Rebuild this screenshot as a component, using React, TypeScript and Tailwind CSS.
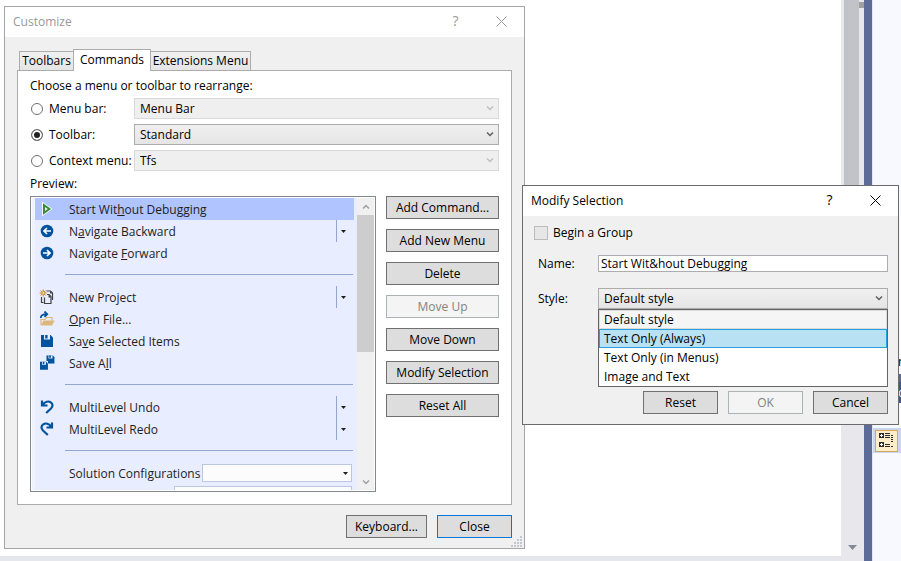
import type { ReactNode } from "react";

type IconProps = { children: ReactNode };

function Icon({ children }: IconProps) {
  return (
    <svg viewBox="0 0 16 16" className="size-4 shrink-0" aria-hidden="true">
      {children}
    </svg>
  );
}

function Floppy({ transform }: { transform?: string }) {
  return (
    <g transform={transform}>
      <path d="M2 2h9.500L14 4.500V14H2z" fill="#00539c" />
      <path d="M5 2h6v4.500H5z" fill="#e8edff" />
      <path d="M6.200 2h2.300v3.300H6.200z" fill="#00539c" />
      <path d="M6.200 2h2.300v4H6.200z" fill="#00539c" opacity="0.300" />
    </g>
  );
}

const icons: Record<string, ReactNode> = {
  start: (
    <Icon>
      <path d="M3 0.500 13.500 8 3 15.500z" fill="#f2f5fb" />
      <path d="M4 2.300 12 8 4 13.700z" fill="#388a34" />
      <path d="M6 6 8.800 8 6 10z" fill="#f0f3f8" />
    </Icon>
  ),
  back: (
    <Icon>
      <circle cx="8" cy="8" r="6.300" fill="#00539c" />
      <path d="M12 8H5M8 5 5 8l3 3" fill="none" stroke="#fff" strokeWidth="1.700" />
    </Icon>
  ),
  forward: (
    <Icon>
      <circle cx="8" cy="8" r="6.300" fill="#00539c" />
      <path d="M4 8h7M8 5l3 3-3 3" fill="none" stroke="#fff" strokeWidth="1.700" />
    </Icon>
  ),
  project: (
    <Icon>
      <path d="M2.500 8v5.500h2" fill="none" stroke="#424242" strokeWidth="1.200" />
      <path d="M7.500 2h4l2 2v7" fill="none" stroke="#424242" strokeWidth="1.200" />
      <path d="M11 2v2.500h2.500z" fill="#424242" />
      <path d="M5.500 8.500v6h6.500V7.500L10 5.500H8" fill="none" stroke="#424242" strokeWidth="1.200" />
      <path d="M9.500 5.500v3H12z" fill="#424242" />
      <path d="M4.200 0.500v7M0.700 4h7M1.700 1.500l5 5M6.700 1.500l-5 5" stroke="#c27d1a" />
      <circle cx="4.200" cy="4" r="1.200" fill="#fff" stroke="#c27d1a" strokeWidth="0.600" />
    </Icon>
  ),
  open: (
    <Icon>
      <path d="M2 14V8.500h4L7.500 6.500H13v3" fill="none" stroke="#dcb67a" strokeWidth="1.200" />
      <path d="M4.500 9.500H15.500L13 14.500H2z" fill="#dcb67a" />
      <path d="M2 7C1.500 4.500 3.500 3.200 8 3.200M5.500 0.500 8.200 3.200 5.500 5.900" fill="none" stroke="#00539c" strokeWidth="1.800" />
    </Icon>
  ),
  save: (
    <Icon>
      <Floppy />
    </Icon>
  ),
  saveAll: (
    <Icon>
      <Floppy transform="translate(6.200 -0.800) scale(0.660)" />
      <path d="M0.500 6h8.500v10H0.500z" fill="#e8edff" />
      <Floppy transform="translate(-0.300 5.500) scale(0.660)" />
    </Icon>
  ),
  undo: (
    <Icon>
      <path d="M3 1.500V6.500h5.500M3.500 6C6 2.500 9.500 1.800 11.800 3.300S14 7.500 12 9.500L7.200 14" fill="none" stroke="#00539c" strokeWidth="2.200" />
    </Icon>
  ),
  redo: (
    <Icon>
      <path d="M13 1.500V6.500H7.500M12.500 6C10 2.500 6.500 1.800 4.200 3.300S2 7.500 4 9.500L8.800 14" fill="none" stroke="#00539c" strokeWidth="2.200" />
    </Icon>
  ),
};

type Command = { icon?: string; label: ReactNode; split?: boolean; selected?: boolean };

const groups: Command[][] = [
  [
    { icon: "start", label: <>Start Wit<u>h</u>out Debugging</>, selected: true },
    { icon: "back", label: <>N<u>a</u>vigate Backward</>, split: true },
    { icon: "forward", label: <>Navigate <u>F</u>orward</> },
  ],
  [
    { icon: "project", label: "New Project", split: true },
    { icon: "open", label: <><u>O</u>pen File...</> },
    { icon: "save", label: <>Sa<u>v</u>e Selected Items</> },
    { icon: "saveAll", label: <>Save A<u>l</u>l</> },
  ],
  [
    { icon: "undo", label: "MultiLevel Undo", split: true },
    { icon: "redo", label: "MultiLevel Redo", split: true },
  ],
];

function Chevron({ className }: { className: string }) {
  return (
    <svg viewBox="0 0 8 6" className={"pointer-events-none h-1.5 w-2 " + className} aria-hidden="true">
      <path d="M1 1.500 4 4.500 7 1.500" fill="none" stroke="currentColor" strokeWidth="1.500" />
    </svg>
  );
}

function DropArrow() {
  return (
    <svg viewBox="0 0 5 3" className="h-[3px] w-[5px]" aria-hidden="true">
      <path d="M0 0h5L2.500 3z" fill="#1e1e1e" />
    </svg>
  );
}

function CommandRow({ icon, label, split, selected }: Command) {
  return (
    <li className={"flex h-[22px] w-[319px] " + (selected ? "bg-[#b0c4ff]" : "")}>
      <button type="button" className="flex flex-1 items-center gap-[14px] pl-1 text-left">
        {icon && icons[icon]}
        <span className="pt-0.5 whitespace-nowrap">{label}</span>
      </button>
      {split && (
        <button type="button" aria-label="More" className="flex w-[18px] items-center border-l border-[#93a5d0] pl-1">
          <DropArrow />
        </button>
      )}
    </li>
  );
}

function Separator() {
  return (
    <li role="separator" className="flex h-[22px] w-[318px] pt-[10px] pl-[30px]">
      <span className="h-px flex-1 bg-[#93a5d0]" />
    </li>
  );
}

type SelectProps = { id: string; value: string; options?: string[]; disabled?: boolean };

function Select({ id, value, options = [value], disabled }: SelectProps) {
  return (
    <span className="relative flex flex-1">
      <select
        id={id}
        aria-label={value}
        defaultValue={value}
        disabled={disabled}
        className="h-[21px] w-full appearance-none border border-[#acacac] bg-linear-to-b from-[#f0f0f0] to-[#e5e5e5] px-[5px] leading-[18px] text-black opacity-100 outline-none disabled:border-[#d9d9d9] disabled:from-[#efefef] disabled:to-[#efefef]"
      >
        {options.map((o) => (
          <option key={o}>{o}</option>
        ))}
      </select>
      <Chevron className={"absolute top-[7px] right-[5px] " + (disabled ? "text-[#bfbfbf]" : "text-[#606060]")} />
    </span>
  );
}

type ButtonProps = { children: ReactNode; disabled?: boolean; primary?: boolean; className?: string };

function Button({ children, disabled, primary, className = "" }: ButtonProps) {
  const tone = disabled
    ? "border-[#adb2b5] bg-[#f4f4f4] text-[#838383]"
    : primary
      ? "border-[#0078d7] bg-[#dddddd]"
      : "border-[#707070] bg-[#dddddd]";
  return (
    <button type="button" disabled={disabled} className={"h-[23px] border text-center leading-5 whitespace-nowrap " + tone + " " + className}>
      {children}
    </button>
  );
}

function TitleBar({ title, className }: { title: string; className: string }) {
  return (
    <header className={"flex h-[30px] items-center bg-white pl-2 " + className}>
      <h2 className="flex-1">{title}</h2>
      <button type="button" aria-label="Help" className="w-[45px] pb-0.5 text-sm">
        ?
      </button>
      <button type="button" aria-label="Close" className="flex w-[46px] justify-center pb-0.5">
        <svg viewBox="0 0 11 11" className="size-[11px]" aria-hidden="true">
          <path d="M0.500 0.500l10 10M10.500 0.500l-10 10" stroke="currentColor" />
        </svg>
      </button>
    </header>
  );
}

const targets = [
  { id: "menubar", label: "Menu bar:", value: "Menu Bar" },
  { id: "toolbar", label: "Toolbar:", value: "Standard" },
  { id: "context", label: "Context menu:", value: "Tfs" },
];

const actions = ["Add Command...", "Add New Menu", "Delete", "Move Up", "Move Down", "Modify Selection", "Reset All"];

function Preview() {
  return (
    <div className="flex h-[296px] w-[346px] border border-[#828790] bg-white p-px">
      <ul className="flex-1 overflow-hidden border-l-[3px] border-[#f0f3ff] bg-[#e8edff] text-[#1e1e1e]">
        {groups.map((group, i) => (
          <li key={i}>
            <ul>
              {group.map((c, j) => (
                <CommandRow key={j} {...c} />
              ))}
              <Separator />
            </ul>
          </li>
        ))}
        <li className="flex h-[22px] w-[317px] items-center justify-between pl-[34px]">
          <label htmlFor="solution" className="pt-0.5 whitespace-nowrap">Solution Configurations</label>
          <span className="relative flex w-[150px]">
            <select id="solution" className="h-[18px] w-full appearance-none border border-[#bcc6e0] bg-[#fcfcfc] outline-none" />
            <span className="pointer-events-none absolute top-2 right-1">
              <DropArrow />
            </span>
          </span>
        </li>
        <li className="flex w-[317px] justify-end pt-0.5">
          <select aria-label="Solution Platforms" className="h-[18px] w-[178px] appearance-none border border-[#bcc6e0] bg-[#fcfcfc] outline-none" />
        </li>
      </ul>
      <div className="flex w-[17px] flex-col bg-[#f0f0f0] text-[#a0a0a0]">
        <span className="flex h-[17px] items-center justify-center">
          <Chevron className="rotate-180" />
        </span>
        <span className="h-[137px] bg-[#cdcdcd]" />
        <span className="mt-auto flex h-[17px] items-center justify-center">
          <Chevron className="" />
        </span>
      </div>
    </div>
  );
}

function CustomizeDialog() {
  return (
    <section role="dialog" aria-label="Customize" className="absolute top-1.5 left-1 w-[521px] border border-[#a5a5a5] bg-[#f0f0f0]">
      <TitleBar title="Customize" className="text-[#999999]" />
      <div className="px-3 pt-3 pb-[10px]">
        <div role="tablist" className="relative -mb-px flex items-end pl-0.5 whitespace-nowrap">
          <button type="button" role="tab" className="h-5 w-[54px] border border-r-0 border-[#acacac] bg-linear-to-b from-[#f0f0f0] to-[#e5e5e5] leading-[18px]">
            Toolbars
          </button>
          <button type="button" role="tab" aria-selected="true" className="h-[22px] w-[78px] border border-b-0 border-[#acacac] bg-white pb-px leading-5">
            Commands
          </button>
          <button type="button" role="tab" className="h-5 w-[100px] border border-l-0 border-[#acacac] bg-linear-to-b from-[#f0f0f0] to-[#e5e5e5] leading-[18px]">
            Extensions Menu
          </button>
        </div>
        <div className="border border-[#acacac] bg-white px-3 pt-[6px] pb-3">
          <p className="h-[21px] leading-[18px]">Choose a menu or toolbar to rearrange:</p>
          <div className="flex flex-col gap-[5px]">
            {targets.map((t) => (
              <div key={t.id} className="flex h-[21px] items-center">
                <label className="flex w-[104px] items-center gap-[6px] pl-px whitespace-nowrap">
                  <input
                    type="radio"
                    name="target"
                    defaultChecked={t.id === "toolbar"}
                    className="size-3 shrink-0 appearance-none rounded-full border border-[#707070] bg-white checked:bg-[#212121] checked:shadow-[inset_0_0_0_2px_white]"
                  />
                  {t.label}
                </label>
                <Select id={t.id} value={t.value} disabled={t.id !== "toolbar"} />
              </div>
            ))}
          </div>
          <p className="h-[25px] pt-1 leading-[18px]">Preview:</p>
          <div className="flex justify-between">
            <Preview />
            <div className="flex w-[113px] flex-col gap-[10px]">
              {actions.map((a) => (
                <Button key={a} disabled={a === "Move Up"}>
                  {a}
                </Button>
              ))}
            </div>
          </div>
        </div>
        <div className="flex justify-end gap-[10px] pt-[10px]">
          <Button className="w-[81px]">Keyboard...</Button>
          <Button primary className="w-[75px]">Close</Button>
        </div>
      </div>
      <svg viewBox="0 0 12 12" className="absolute right-px bottom-px size-3" aria-hidden="true">
        <path d="M9 1h2v2H9zM6 4h2v2H6zM9 4h2v2H9zM3 7h2v2H3zM6 7h2v2H6zM9 7h2v2H9zM0 10h2v2H0zM3 10h2v2H3zM6 10h2v2H6zM9 10h2v2H9z" fill="#c2c8d0" />
      </svg>
    </section>
  );
}

const styles = ["Default style", "Text Only (Always)", "Text Only (in Menus)", "Image and Text"];

function ModifyDialog() {
  return (
    <section role="dialog" aria-label="Modify Selection" className="absolute top-[185px] left-[522px] w-[377px] border border-[#6b6b6b] bg-[#f0f0f0]">
      <TitleBar title="Modify Selection" className="text-black" />
      <div className="px-[10px] pt-2 pb-[10px]">
        <label className="flex h-[18px] items-center gap-[5px] pl-px">
          <input type="checkbox" className="size-[14px] appearance-none border border-[#bcbcbc] bg-[#e6e6e6]" />
          Begin a Group
        </label>
        <div className="flex items-center pt-[13px] pl-[5px]">
          <label htmlFor="name" className="w-[60px] leading-[17px]">Name:</label>
          <input id="name" defaultValue="Start Wit&hout Debugging" className="h-[17px] min-w-0 flex-1 border border-[#abadb3] bg-white px-0.5 leading-[15px] outline-none" />
        </div>
        <div className="relative flex items-center pt-4 pl-[5px]">
          <label htmlFor="style" className="w-[60px] leading-[21px]">Style:</label>
          <Select id="style" value="Default style" options={styles} />
          <ul role="listbox" aria-label="Style" className="absolute top-full right-0 left-[65px] z-10 border border-[#646464] bg-white">
            {styles.map((s, i) => (
              <li
                key={s}
                role="option"
                aria-selected={i === 1}
                className={
                  "h-[19px] border px-1 leading-[17px] " +
                  (i === 0 ? "border-[#dadada] bg-[#f5f5f5]" : i === 1 ? "border-[#26a0da] bg-[#b9e1f4]" : "border-transparent")
                }
              >
                {s}
              </li>
            ))}
          </ul>
        </div>
        <div className="flex justify-end gap-[10px] pt-[82px]">
          <Button className="w-[75px]">Reset</Button>
          <Button disabled className="w-[75px]">OK</Button>
          <Button className="w-[75px]">Cancel</Button>
        </div>
      </div>
    </section>
  );
}

function Workspace() {
  return (
    <div className="flex h-screen bg-white">
      <div className="flex flex-1 flex-col justify-end">
        <div className="h-[5px] bg-[#e6e7ec]" />
      </div>
      <div className="relative flex w-[23px] flex-col items-center bg-[#e8e8ec]">
        <div className="mr-0.5 h-64 w-[15px] bg-[#c2c3c9]" />
        <svg viewBox="0 0 9 5" className="mt-auto mb-[11px] h-[5px] w-[9px]" aria-hidden="true">
          <path d="M0 0h9L4.500 5z" fill="#868999" />
        </svg>
        <span className="absolute top-0.5 right-0 h-1.5 w-[5px] bg-[#a0a0a0]" />
      </div>
      <div className="w-2 bg-[#5d6b99]" />
      <aside className="flex w-[29px] flex-col overflow-hidden border-l border-[#e3e7f5] bg-[#f7f9fe]">
        <div className="flex h-[374px] items-end pb-1 pl-[25px]">n</div>
        <div className="h-2 bg-[#5d6b99]" />
        <div className="h-[21px] bg-[#40568d] pl-[25px] leading-[21px] text-white">o</div>
        <div className="h-[25px] bg-[#f7f9fe]" />
        <div className="flex h-[25px] items-center bg-[#ccd5f0] pl-0.5">
          <button type="button" aria-label="Categorized" className="flex h-[22px] w-[23px] items-center justify-center border border-[#d9a95b] bg-[#fdecc8]">
            <svg viewBox="0 0 15 15" className="size-[15px]" aria-hidden="true">
              <path d="M0 0h5v5H0zM0 9h5v5H0z" fill="#2d2d30" />
              <path d="M1 2.500h3M2.500 1v3M1 11.500h3M2.500 10v3" stroke="#fff" />
              <path d="M6 .5h5M6 2.500h5M6 4.500h5M6 11.500h5M6 13.500h5M12 2.500h2M12 4.500h2M12 6.500h2M12 8.500h2M12 13.500h2" stroke="#2d2d30" />
            </svg>
          </button>
        </div>
      </aside>
    </div>
  );
}

export default function App() {
  return (
    <main className="relative overflow-hidden font-['Open_Sans',sans-serif] text-xs text-black">
      <Workspace />
      <CustomizeDialog />
      <ModifyDialog />
    </main>
  );
}
